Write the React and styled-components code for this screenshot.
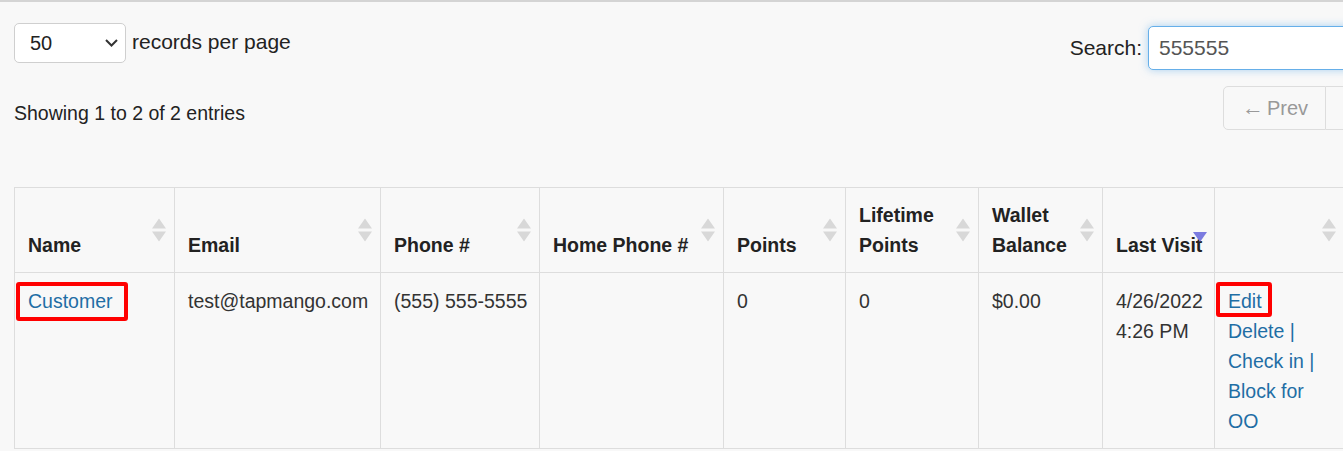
import React from "react";
import styled, { createGlobalStyle } from "styled-components";

const Global = createGlobalStyle`
  html, body { margin: 0; padding: 0; background: #f8f8f8; overflow: hidden; }
  body { font-family: "Liberation Sans", Arial, sans-serif; font-size: 19.5px; color: #333; }
`;

const Page = styled.div`
  border-top: 2px solid #d4d4d4;
  padding: 0 0 0 14px;
  width: 1329px;
`;

const Bar = styled.div`
  display: flex;
  justify-content: space-between;
  align-items: flex-start;
  margin-top: ${(p) => p.$top}px;
`;

const Group = styled.div`
  display: flex;
  align-items: center;
  gap: 6px;
  margin-top: ${(p) => p.$top || 0}px;
  margin-right: ${(p) => p.$overflow || 0}px;
`;

const SelectWrap = styled.div`
  position: relative;
  width: 112px;
  height: 40px;
`;

const Select = styled.select`
  appearance: none;
  -webkit-appearance: none;
  width: 100%;
  height: 100%;
  box-sizing: border-box;
  border: 1px solid #cfcfcf;
  border-radius: 5px;
  background: #fff;
  font-family: inherit;
  font-size: 20px;
  color: #222;
  padding: 0 0 0 15px;
  outline: none;
`;

const Chevron = styled.svg`
  position: absolute;
  right: 8px;
  top: 16px;
  pointer-events: none;
`;

const Label = styled.span`
  font-size: 21px;
  color: #222;
  line-height: 30px;
  margin-top: ${(p) => p.$shift || 0}px;
`;

const SearchInput = styled.input`
  width: 240px;
  height: 44px;
  box-sizing: border-box;
  border: 1px solid #66afe9;
  border-radius: 5px;
  box-shadow: 0 0 8px rgba(102, 175, 233, 0.55);
  background: #fff;
  font-family: inherit;
  font-size: 21px;
  color: #555;
  padding: 0 10px;
  outline: none;
`;

const Info = styled.div`
  padding-top: 12px;
  line-height: 30px;
  color: #222;
`;

const Pager = styled.ul`
  display: flex;
  list-style: none;
  margin: 0;
  padding: 0;
`;

const PageBtn = styled.li`
  height: 44px;
  box-sizing: border-box;
  display: flex;
  align-items: center;
  gap: 3px;
  padding: 0 ${(p) => (p.$first ? 18 : 30)}px;
  border: 1px solid #ddd;
  border-left-width: ${(p) => (p.$first ? 1 : 0)}px;
  border-radius: ${(p) => (p.$first ? "5px 0 0 5px" : "0 5px 5px 0")};
  background: #f8f8f8;
  color: #999;
  font-size: 20px;
  width: ${(p) => p.$w}px;
  white-space: nowrap;
`;

const Arrow = styled.span`
  font-size: 22px;
  line-height: 1;
`;

const Table = styled.table`
  margin-top: 57px;
  width: 1330px;
  table-layout: fixed;
  border-collapse: collapse;
  font-size: 19.5px;
`;

const Th = styled.th`
  position: relative;
  text-align: left;
  vertical-align: bottom;
  font-weight: bold;
  color: #222;
  line-height: 30px;
  padding: 12px 12px 12px 13px;
  border: 1px solid #ddd;
  white-space: ${(p) => (p.$nowrap ? "nowrap" : "normal")};
`;

const Td = styled.td`
  position: relative;
  vertical-align: top;
  line-height: 30px;
  padding: 13px 6px 12px 13px;
  border: 1px solid #ddd;
  color: #333;
  white-space: ${(p) => (p.$nowrap ? "nowrap" : "normal")};
`;

const Link = styled.a`
  color: #1f6ea5;
  text-decoration: none;
`;

const Actions = styled.div`
  max-width: 98px;
`;

const Highlight = styled.span`
  position: absolute;
  left: 1px;
  top: 9px;
  width: ${(p) => p.$w}px;
  height: ${(p) => p.$h}px;
  box-sizing: border-box;
  border: 4px solid #ff0000;
  border-radius: 3px;
  pointer-events: none;
`;

const SortIcon = styled.svg`
  position: absolute;
  right: 8px;
  top: 50%;
  transform: translateY(-50%);
`;

const SortDesc = styled.svg`
  position: absolute;
  right: 7px;
  top: 44px;
`;

const Both = () => (
  <SortIcon width="14" height="23" viewBox="0 0 14 23">
    <polygon points="7,0 14,10 0,10" fill="#d8d8d8" />
    <polygon points="0,13 14,13 7,23" fill="#d8d8d8" />
  </SortIcon>
);

const cols = [160, 206, 159, 184, 122, 133, 124, 112, 130];
const heads = ["Name", "Email", "Phone #", "Home Phone #", "Points", "Lifetime Points", "Wallet Balance", "Last Visit", ""];

export default function App() {
  return (
    <>
      <Global />
      <Page>
        <Bar $top={21}>
          <Group>
            <SelectWrap>
              <Select defaultValue="50">
                <option value="10">10</option>
                <option value="25">25</option>
                <option value="50">50</option>
                <option value="100">100</option>
              </Select>
              <Chevron width="13" height="8" viewBox="0 0 13 8">
                <polyline points="1,1 6.5,6.5 12,1" fill="none" stroke="#333" strokeWidth="2" />
              </Chevron>
            </SelectWrap>
            <Label $shift={-3}>records per page</Label>
          </Group>
          <Group $top={3} $overflow={-45}>
            <Label>Search:</Label>
            <SearchInput defaultValue="555555" />
          </Group>
        </Bar>
        <Bar $top={16}>
          <Info>Showing 1 to 2 of 2 entries</Info>
          <Group $overflow={-83}>
            <Pager>
              <PageBtn $first $w={103}>
                <Arrow>←</Arrow>Prev
              </PageBtn>
              <PageBtn $w={100}>Next →</PageBtn>
            </Pager>
          </Group>
        </Bar>
        <Table>
          <colgroup>
            {cols.map((w, i) => (
              <col key={i} style={{ width: w }} />
            ))}
          </colgroup>
          <thead>
            <tr>
              {heads.map((h, i) => (
                <Th key={i} $nowrap={h === "Last Visit"}>
                  {h}
                  {h === "Last Visit" ? (
                    <SortDesc width="14" height="10" viewBox="0 0 14 10">
                      <polygon points="0,0 14,0 7,10" fill="#7b7be0" />
                    </SortDesc>
                  ) : (
                    <Both />
                  )}
                </Th>
              ))}
            </tr>
          </thead>
          <tbody>
            <tr>
              <Td>
                <Link href="#">Customer</Link>
                <Highlight $w={112} $h={39} />
              </Td>
              <Td $nowrap>test@tapmango.com</Td>
              <Td>(555) 555-5555</Td>
              <Td></Td>
              <Td>0</Td>
              <Td>0</Td>
              <Td>$0.00</Td>
              <Td>
                4/26/2022
                <br />
                4:26 PM
              </Td>
              <Td>
                <Actions>
                  <Link href="#">Edit |</Link> <Link href="#">Delete |</Link>{" "}
                  <Link href="#">Check in |</Link> <Link href="#">Block for OO</Link>
                </Actions>
                <Highlight $w={56} $h={35} />
              </Td>
            </tr>
          </tbody>
        </Table>
      </Page>
    </>
  );
}
